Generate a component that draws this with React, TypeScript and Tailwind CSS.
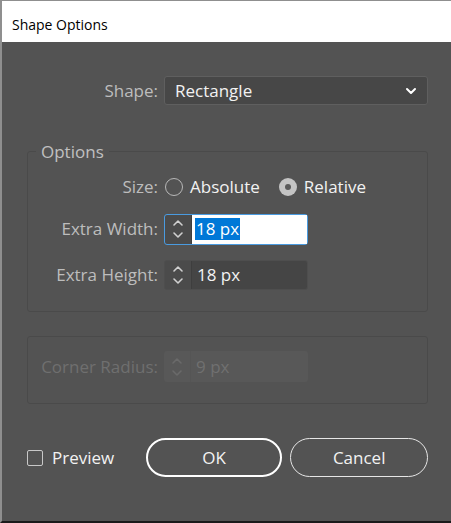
import { ChevronDown } from "lucide-react"

function Spinner({ disabled }: { disabled?: boolean }) {
  const c = disabled ? "#6a6a6a" : "#d0d0d0"
  return (
    <div className={`flex h-full w-[27px] shrink-0 items-center justify-center border-r ${disabled ? "border-[#555555]" : "border-[#3e3e3e]"}`}>
      <svg width="12" height="22" viewBox="0 0 12 22" fill="none" stroke={c} strokeWidth="1.6" strokeLinecap="round" strokeLinejoin="round">
        <path d="M2 7 L6 3 L10 7" />
        <path d="M2 15 L6 19 L10 15" />
      </svg>
    </div>
  )
}

export default function App() {
  return (
    <div
      className="w-[451px] h-[523px] overflow-hidden flex flex-col bg-white"
      style={{ fontFamily: '"Open Sans", "Noto Sans", sans-serif' }}
    >
      {/* Title bar */}
      <div className="h-[42px] shrink-0 border-t border-l-2 border-[#8f8f8f] bg-white flex items-center pl-[10px] pt-[5px] text-[14px] text-black">
        Shape Options
      </div>

      {/* Body */}
      <div className="flex-1 border-l-2 border-b-2 border-l-[#8f8f8f] border-b-[#1a1a1a] bg-[#535353] pl-[25px] pr-[23px] pt-[34px] text-[17px]">
        {/* Shape row */}
        <div className="flex items-center">
          <div className="w-[131px] text-right text-[#bdbdbd]">Shape:</div>
          <div className="ml-[6px] flex h-[29px] w-[264px] items-center justify-between rounded-[3px] border border-[#5f5f5f] bg-[#474747] pl-[10px] pr-[8px] text-[#f2f2f2]">
            <span>Rectangle</span>
            <ChevronDown className="h-[16px] w-[16px] text-white" strokeWidth={3} />
          </div>
        </div>

        {/* Options group */}
        <div className="relative mt-[46px] rounded-[3px] border border-[#4a4a4a] pt-[23px] pb-[21px]">
          <span className="absolute left-[8px] top-[-13px] bg-[#535353] px-[5px] text-[#c0c0c0]">Options</span>

          <div className="flex h-[24px] items-center">
            <div className="w-[130px] text-right text-[#bdbdbd]">Size:</div>
            <div className="ml-[7px] h-[18px] w-[18px] rounded-full border-[1.5px] border-[#b8b8b8]" />
            <span className="ml-[7px] text-[#f2f2f2]">Absolute</span>
            <div className="ml-[19px] flex h-[18px] w-[18px] items-center justify-center rounded-full bg-[#c4c4c4]">
              <div className="h-[6px] w-[6px] rounded-full bg-[#5a5a5a]" />
            </div>
            <span className="ml-[7px] text-[#f2f2f2]">Relative</span>
          </div>

          <div className="mt-[15px] flex h-[30px] items-center">
            <div className="w-[130px] text-right text-[#bdbdbd]">Extra Width:</div>
            <div className="ml-[6px] flex h-[31px] w-[144px] items-center rounded-[3px] border border-[#4a9be0] bg-[#4b4b4b]">
              <Spinner />
              <div className="flex h-full flex-1 items-center bg-white pl-[3px]">
                <span className="bg-[#0078d7] pr-[1px] pl-[1px] leading-[22px] text-white">18 px</span>
              </div>
            </div>
          </div>

          <div className="mt-[16px] flex h-[30px] items-center">
            <div className="w-[130px] text-right text-[#bdbdbd]">Extra Height:</div>
            <div className="ml-[6px] flex h-[30px] w-[144px] items-center rounded-[3px] border border-[#4e4e4e] bg-[#4b4b4b]">
              <Spinner />
              <div className="flex h-full flex-1 items-center rounded-r-[3px] bg-[#454545] pl-[5px] text-[#f2f2f2]">18 px</div>
            </div>
          </div>
        </div>

        {/* Corner radius group (disabled) */}
        <div className="mt-[24px] rounded-[3px] border border-[#4a4a4a] pt-[14px] pb-[21px]">
          <div className="flex h-[31px] items-center">
            <div className="w-[130px] text-right text-[#6f6f6f]">Corner Radius:</div>
            <div className="ml-[6px] flex h-[31px] w-[144px] items-center rounded-[3px] bg-[#585858]">
              <Spinner disabled />
              <div className="pl-[5px] text-[#707070]">9 px</div>
            </div>
          </div>
        </div>

        {/* Bottom row */}
        <div className="mt-[34px] flex items-center">
          <div className="flex w-[119px] items-center">
            <div className="h-[16px] w-[16px] rounded-[2px] border border-[#c8c8c8]" />
            <span className="ml-[9px] text-[#f2f2f2]">Preview</span>
          </div>
          <button className="flex h-[39px] w-[137px] items-center justify-center rounded-full border-2 border-white text-[#f2f2f2]">
            OK
          </button>
          <button className="ml-[8px] flex h-[39px] w-[138px] items-center justify-center rounded-full border-[1.5px] border-[#e6e6e6] text-[#f2f2f2]">
            Cancel
          </button>
        </div>
      </div>
    </div>
  )
}
